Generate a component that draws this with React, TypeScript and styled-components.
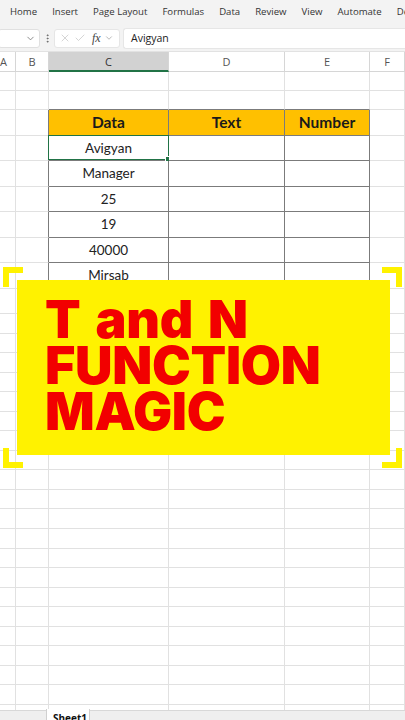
import React from "react";
import styled, { createGlobalStyle } from "styled-components";
import { ChevronDown, X, Check, EllipsisVertical } from "lucide-react";

const GlobalStyle = createGlobalStyle`
  html, body { margin: 0; padding: 0; background: #fff; }
  body { width: 405px; height: 720px; overflow: hidden; font-family: "Open Sans", "Noto Sans", sans-serif; }
`;

const COLS = [16, 33, 120, 116, 85, 35];
const COL_NAMES = ["A", "B", "C", "D", "E", "F"];

const Page = styled.div`
  position: relative;
  width: 405px;
  height: 720px;
  overflow: hidden;
  background: #fff;
`;

const Ribbon = styled.div`
  height: 23px;
  background: #f3f3f3;
  display: flex;
  align-items: center;
  gap: 15px;
  padding-left: 10px;
  white-space: nowrap;
  font-size: 9.6px;
  color: #333;
`;

const FormulaBar = styled.div`
  height: 29px;
  background: #f3f3f3;
  display: flex;
  align-items: center;
  padding-top: 2px;
  box-sizing: border-box;
  border-bottom: 1px solid #e2e2e2;
`;

const NameBox = styled.div`
  width: 42px;
  height: 19px;
  margin-left: -2px;
  background: #fff;
  border: 1px solid #e0e0e0;
  border-radius: 3px;
  display: flex;
  align-items: center;
  justify-content: flex-end;
  padding-right: 3px;
  box-sizing: border-box;
  color: #666;
`;

const Dots = styled.div`
  width: 14px;
  display: flex;
  justify-content: center;
  color: #666;
`;

const FxBox = styled.div`
  width: 66px;
  height: 19px;
  background: #fff;
  border: 1px solid #e6e6e6;
  border-radius: 3px;
  display: flex;
  align-items: center;
  gap: 3px;
  padding-left: 4px;
  box-sizing: border-box;
  color: #b8b8b8;
`;

const Fx = styled.span`
  font-family: "Liberation Serif", serif;
  font-style: italic;
  font-size: 12px;
  color: #444;
  margin-left: 3px;
`;

const Input = styled.div`
  flex: 1;
  height: 19px;
  margin-left: 3px;
  background: #fff;
  border: 1px solid #e6e6e6;
  border-right: none;
  border-radius: 3px 0 0 3px;
  display: flex;
  align-items: center;
  padding-left: 7px;
  font-size: 10.5px;
  color: #222;
`;

const Grid = styled.div`
  display: grid;
  grid-template-columns: ${COLS.map((w) => w + "px").join(" ")};
`;

const ColHead = styled.div<{ $active?: boolean; $first?: boolean }>`
  height: 20px;
  display: flex;
  align-items: center;
  justify-content: ${(p) => (p.$first ? "flex-start" : "center")};
  font-size: 11px;
  color: ${(p) => (p.$active ? "#333" : "#555")};
  background: ${(p) => (p.$active ? "#d2d2d2" : "#fff")};
  border-right: 1px solid #d6d6d6;
  border-bottom: ${(p) => (p.$active ? "2px solid #217346" : "1px solid #d6d6d6")};
  box-sizing: border-box;
`;

const Cell = styled.div<{
  $h: number;
  $darkRight?: boolean;
  $darkBottom?: boolean;
  $fill?: string;
  $bold?: boolean;
}>`
  position: relative;
  height: ${(p) => p.$h}px;
  box-sizing: border-box;
  border-right: 1px solid ${(p) => (p.$darkRight ? "#7b7b7b" : "#e1e1e1")};
  border-bottom: 1px solid ${(p) => (p.$darkBottom ? "#7b7b7b" : "#e1e1e1")};
  background: ${(p) => p.$fill || "#fff"};
  display: flex;
  align-items: center;
  justify-content: center;
  font-family: "Lato", "Open Sans", sans-serif;
  font-size: ${(p) => (p.$bold ? "15.5px" : "13.5px")};
  font-weight: ${(p) => (p.$bold ? 700 : 400)};
  color: ${(p) => (p.$bold ? "#1a1a1a" : "#222")};
  white-space: nowrap;
  overflow: visible;
`;

const Selected = styled.div`
  position: absolute;
  inset: -1px -1px 0 -1px;
  border: 1.5px solid #217346;
  pointer-events: none;
`;

const Handle = styled.div`
  position: absolute;
  right: -4px;
  bottom: -4px;
  width: 5px;
  height: 5px;
  background: #217346;
  border: 1px solid #fff;
`;

const Banner = styled.div`
  position: absolute;
  left: 17px;
  top: 280px;
  width: 373px;
  height: 175px;
  background: #fff200;
  box-sizing: border-box;
  padding: 17px 0 0 28px;
`;

const BannerLine = styled.div<{ $wordGap?: number }>`
  font-family: "Inter", "Liberation Sans", sans-serif;
  font-weight: 900;
  font-size: 52px;
  line-height: 46px;
  height: 46px;
  letter-spacing: -0.3px;
  word-spacing: ${(p) => p.$wordGap ?? 0}px;
  color: #f20000;
  white-space: nowrap;
`;

const Corner = styled.div<{ $pos: "tl" | "tr" | "bl" | "br" }>`
  position: absolute;
  width: 20px;
  height: 20px;
  box-sizing: border-box;
  border-color: #fff200;
  border-style: solid;
  border-width: 0;
  ${(p) => (p.$pos[0] === "t" ? "top: 267px; border-top-width: 6px;" : "top: 448px; border-bottom-width: 6px;")}
  ${(p) => (p.$pos[1] === "l" ? "left: 3px; border-left-width: 6px;" : "left: 382px; border-right-width: 6px;")}
`;

const TabBar = styled.div`
  position: absolute;
  left: 0;
  right: 0;
  top: 710px;
  height: 10px;
  background: #efefef;
  border-top: 1px solid #d8d8d8;
`;

const SheetTab = styled.div`
  position: absolute;
  left: 46px;
  top: -2px;
  width: 44px;
  height: 14px;
  background: #fff;
  border-left: 1px solid #d0d0d0;
  border-right: 1px solid #d0d0d0;
  font-size: 10px;
  font-weight: 700;
  color: #111;
  padding: 4px 0 0 6px;
  box-sizing: border-box;
  line-height: 10px;
`;

const TABS = ["Home", "Insert", "Page Layout", "Formulas", "Data", "Review", "View", "Automate", "Developer"];

type RowDef = { h: number; cells?: string[]; header?: boolean; table?: boolean; top?: boolean };

const rows: RowDef[] = [
  { h: 19 },
  { h: 19, top: true },
  { h: 25.5, header: true, table: true, cells: ["Data", "Text", "Number"] },
  { h: 25.5, table: true, cells: ["Avigyan", "", ""] },
  { h: 25.5, table: true, cells: ["Manager", "", ""] },
  { h: 25.5, table: true, cells: ["25", "", ""] },
  { h: 25.5, table: true, cells: ["19", "", ""] },
  { h: 25.5, table: true, cells: ["40000", "", ""] },
  { h: 25.5, table: true, cells: ["Mirsab", "", ""] },
  { h: 25.5, table: true, cells: ["TRUE", "", ""] },
  ...Array.from({ length: 21 }, () => ({ h: 19.55 })),
];

export default function App() {
  return (
    <Page>
      <GlobalStyle />
      <Ribbon>
        {TABS.map((t) => (
          <span key={t}>{t}</span>
        ))}
      </Ribbon>
      <FormulaBar>
        <NameBox>
          <ChevronDown size={11} strokeWidth={1.6} />
        </NameBox>
        <Dots>
          <EllipsisVertical size={11} strokeWidth={2} />
        </Dots>
        <FxBox>
          <X size={12} strokeWidth={1.2} />
          <Check size={12} strokeWidth={1.2} />
          <Fx>fx</Fx>
          <ChevronDown size={10} strokeWidth={1.4} color="#888" />
        </FxBox>
        <Input>Avigyan</Input>
      </FormulaBar>
      <Grid>
        {COL_NAMES.map((c, i) => (
          <ColHead key={c} $active={c === "C"} $first={i === 0}>
            {c}
          </ColHead>
        ))}
        {rows.map((r, ri) =>
          COL_NAMES.map((c, ci) => {
            const inTable = !!r.table && ci >= 2 && ci <= 4;
            const darkRight = !!r.table && ci >= 1 && ci <= 4;
            const darkBottom = (!!r.table || !!r.top) && ci >= 2 && ci <= 4;
            const text = inTable && r.cells ? r.cells[ci - 2] : "";
            const selected = ri === 3 && ci === 2;
            return (
              <Cell
                key={`${ri}-${c}`}
                $h={r.h}
                $darkRight={darkRight}
                $darkBottom={darkBottom}
                $fill={r.header && inTable ? "#ffc000" : undefined}
                $bold={r.header && inTable}
              >
                {text}
                {selected && (
                  <Selected>
                    <Handle />
                  </Selected>
                )}
              </Cell>
            );
          })
        )}
      </Grid>
      <Banner>
        <BannerLine $wordGap={5}>T and N</BannerLine>
        <BannerLine>FUNCTION</BannerLine>
        <BannerLine>MAGIC</BannerLine>
      </Banner>
      <Corner $pos="tl" />
      <Corner $pos="tr" />
      <Corner $pos="bl" />
      <Corner $pos="br" />
      <TabBar>
        <SheetTab>Sheet1</SheetTab>
      </TabBar>
    </Page>
  );
}
